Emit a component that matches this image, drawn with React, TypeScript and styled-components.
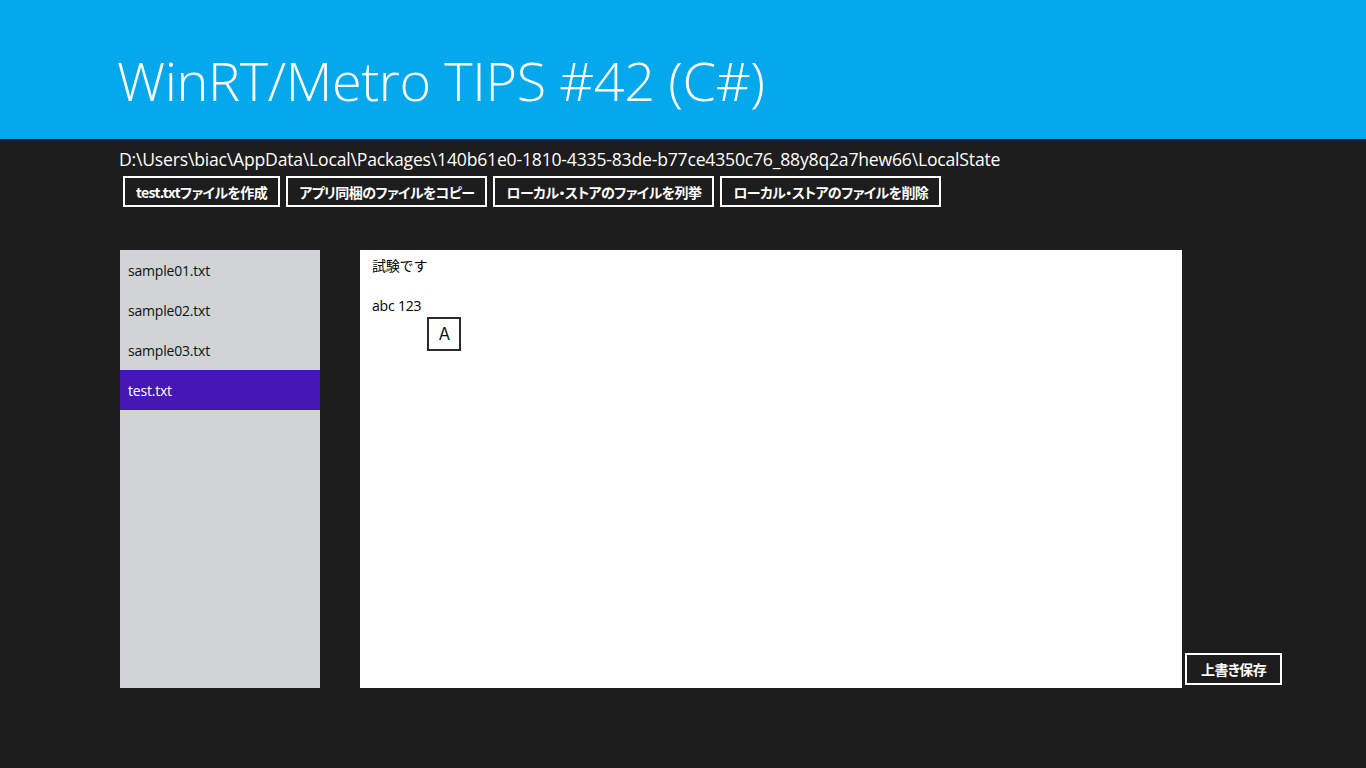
import React from "react";
import styled, { createGlobalStyle } from "styled-components";

const GlobalStyle = createGlobalStyle`
  html, body {
    margin: 0;
    padding: 0;
    background: #1d1d1d;
  }
  body {
    font-family: "Open Sans", "Noto Sans CJK JP", sans-serif;
    color: #fff;
  }
`;

const Page = styled.div`
  width: 1366px;
  height: 768px;
  overflow: hidden;
  background: #1d1d1d;
`;

const Header = styled.header`
  height: 140px;
  background: #05a8eb;
  border-bottom: 1px solid #0a0a0a;
  box-sizing: border-box;
  padding-left: 117px;
  padding-top: 42px;
`;

const Title = styled.h1`
  margin: 0;
  font-family: "Open Sans", sans-serif;
  font-weight: 300;
  font-size: 54px;
  line-height: 76px;
  color: #fff;
  letter-spacing: -0.4px;
`;

const Content = styled.main`
  padding: 8px 0 0 119px;
`;

const PathText = styled.div`
  font-family: "Open Sans", "Noto Sans CJK JP", sans-serif;
  font-size: 17.6px;
  line-height: 22px;
  color: #fff;
  letter-spacing: -0.2px;
`;

const Toolbar = styled.div`
  display: flex;
  gap: 6px;
  margin-top: 6px;
  padding-left: 4px;
`;

const Button = styled.button`
  height: 31px;
  box-sizing: border-box;
  padding: 0 11px;
  background: transparent;
  border: 2px solid #fff;
  color: #fff;
  font-family: "Noto Sans CJK JP", sans-serif;
  font-weight: 700;
  font-size: 14px;
  font-feature-settings: "palt";
  letter-spacing: -0.6px;
  cursor: pointer;
`;

const Body = styled.div`
  display: flex;
  margin-top: 43px;
  padding-left: 1px;
`;

const FileList = styled.ul`
  list-style: none;
  margin: 0;
  padding: 0;
  width: 200px;
  height: 438px;
  background: #d2d3d4;
`;

const FileItem = styled.li<{ $selected?: boolean }>`
  height: 40px;
  display: flex;
  align-items: center;
  padding-left: 8px;
  font-family: "Open Sans", sans-serif;
  font-size: 14px;
  letter-spacing: -0.2px;
  color: ${(p) => (p.$selected ? "#fff" : "#111")};
  background: ${(p) => (p.$selected ? "#4617b4" : "transparent")};
`;

const Editor = styled.div`
  position: relative;
  margin-left: 40px;
  width: 822px;
  height: 438px;
  background: #fff;
  color: #000;
  box-sizing: border-box;
  padding: 6px 12px;
  font-family: "Open Sans", "Noto Sans CJK JP", sans-serif;
  font-size: 14px;
  line-height: 20px;
`;

const Line = styled.div`
  height: 20px;
  letter-spacing: -0.2px;
`;

const ImeBox = styled.div`
  position: absolute;
  left: 67px;
  top: 67px;
  width: 34px;
  height: 34px;
  box-sizing: border-box;
  border: 2px solid #2a2a2a;
  display: flex;
  align-items: center;
  justify-content: center;
  font-family: "Liberation Sans", sans-serif;
  font-size: 19px;
  color: #111;
`;

const ImeGlyph = styled.span`
  display: inline-block;
  transform: scaleX(0.85);
`;

const SaveColumn = styled.div`
  display: flex;
  align-items: flex-end;
  padding-left: 3px;
  padding-bottom: 3px;
`;

const SaveButton = styled(Button)`
  height: 32px;
  padding: 0 14px;
`;

const files = ["sample01.txt", "sample02.txt", "sample03.txt", "test.txt"];

const App: React.FC = () => {
  return (
    <Page>
      <GlobalStyle />
      <Header>
        <Title>WinRT/Metro TIPS #42 (C#)</Title>
      </Header>
      <Content>
        <PathText>
          D:\Users\biac\AppData\Local\Packages\140b61e0-1810-4335-83de-b77ce4350c76_88y8q2a7hew66\LocalState
        </PathText>
        <Toolbar>
          <Button>test.txtファイルを作成</Button>
          <Button>アプリ同梱のファイルをコピー</Button>
          <Button>ローカル・ストアのファイルを列挙</Button>
          <Button>ローカル・ストアのファイルを削除</Button>
        </Toolbar>
        <Body>
          <FileList>
            {files.map((f) => (
              <FileItem key={f} $selected={f === "test.txt"}>
                {f}
              </FileItem>
            ))}
          </FileList>
          <Editor>
            <Line>試験です</Line>
            <Line />
            <Line>abc 123</Line>
            <ImeBox>
              <ImeGlyph>A</ImeGlyph>
            </ImeBox>
          </Editor>
          <SaveColumn>
            <SaveButton>上書き保存</SaveButton>
          </SaveColumn>
        </Body>
      </Content>
    </Page>
  );
};

export default App;
